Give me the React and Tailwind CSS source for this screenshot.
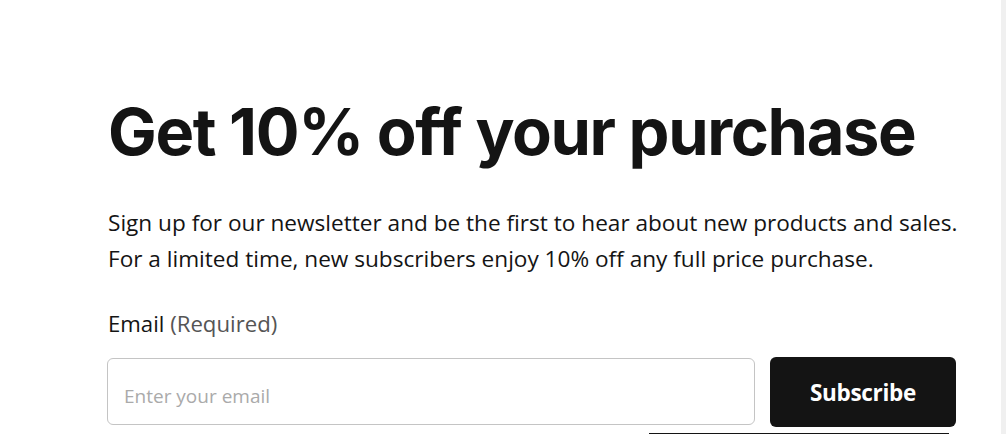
import React from 'react';

const App = () => {
  return (
    <div className="flex h-[434px] w-[1006px] overflow-hidden bg-white">
      <div className="flex-1">
        <div className="ml-[108px] w-[848px] pt-[92px]">
          <h1 className="font-['Inter',sans-serif] text-[65px] font-bold leading-[80px] tracking-[-1.4px] text-[#141414]">
            Get 10% off your purchase
          </h1>
          <p className="mt-[33px] whitespace-nowrap font-['Open_Sans',sans-serif] text-[22.6px] leading-[36px] text-[#141414]">
            Sign up for our newsletter and be the first to hear about new products and sales.
            <br />
            For a limited time, new subscribers enjoy 10% off any full price purchase.
          </p>
          <label className="mt-[33px] block font-['Open_Sans',sans-serif] text-[22.2px] leading-[28px] text-[#141414]">
            Email <span className="text-[#555]">(Required)</span>
          </label>
          <div className="mt-[20px] flex items-start gap-[15px]">
            <input
              type="email"
              placeholder="Enter your email"
              className="h-[67px] w-[648px] -ml-px rounded-[6px] border border-[#c4c4c4] px-[16px] pt-[8px] font-['Open_Sans',sans-serif] text-[19px] text-[#141414] placeholder:text-[#aaa] outline-none"
            />
            <button className="-mt-px h-[70px] w-[186px] rounded-[6px] bg-[#141414] pt-[2px] font-['Open_Sans',sans-serif] text-[22.5px] font-bold tracking-[-0.3px] text-white">
              Subscribe
            </button>
          </div>
          <div className="ml-[541px] mt-[6px] h-px w-[300px] bg-[#141414]" />
        </div>
      </div>
      <div className="w-[5px] bg-[#f0f0f0]" />
    </div>
  );
};

export default App;
